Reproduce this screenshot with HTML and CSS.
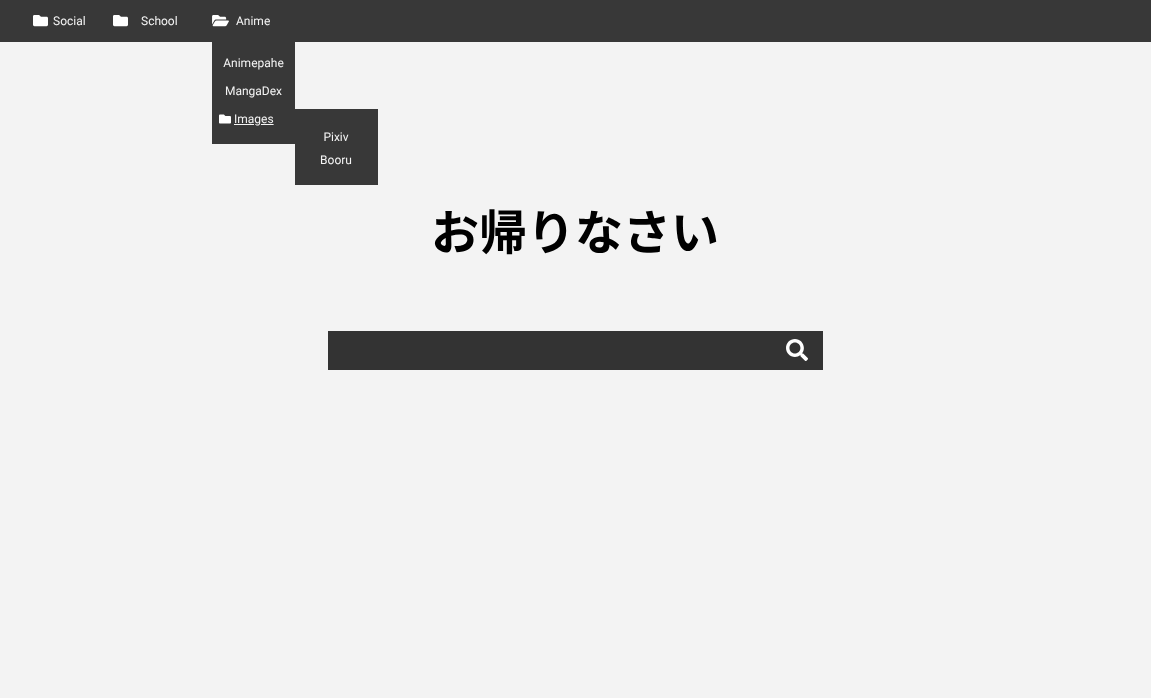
FILE: index.html
```html
<!DOCTYPE html>
<html lang="ja">
<head>
<meta charset="utf-8">
<title>お帰りなさい</title>
<link rel="stylesheet" href="styles.css">
</head>
<body>
<svg class="sprite" width="0" height="0" aria-hidden="true">
  <symbol id="folder" viewBox="0 0 512 512"><path d="M464 128H272l-64-64H48C21.49 64 0 85.49 0 112v288c0 26.51 21.49 48 48 48h416c26.51 0 48-21.49 48-48V176c0-26.51-21.49-48-48-48z"/></symbol>
  <symbol id="folder-open" viewBox="0 0 576 512"><path d="M572.694 292.093L500.27 416.248A63.997 63.997 0 0 1 444.989 448H45.025c-18.523 0-30.064-20.093-20.731-36.093l72.424-124.155A64 64 0 0 1 152 256h399.964c18.523 0 30.064 20.093 20.73 36.093zM152 224h328v-48c0-26.51-21.49-48-48-48H272l-64-64H48C21.49 64 0 85.49 0 112v278.046l69.077-118.418C86.214 242.25 117.989 224 152 224z"/></symbol>
  <symbol id="search" viewBox="0 0 512 512"><path d="M505 442.7L405.3 343c-4.5-4.5-10.6-7-17-7H372c27.6-35.3 44-79.7 44-128C416 93.1 322.9 0 208 0S0 93.1 0 208s93.1 208 208 208c48.3 0 92.7-16.4 128-44v16.3c0 6.4 2.5 12.5 7 17l99.7 99.7c9.4 9.4 24.6 9.4 33.9 0l28.3-28.3c9.4-9.4 9.4-24.6.1-34zM208 336c-70.7 0-128-57.2-128-128 0-70.7 57.2-128 128-128 70.7 0 128 57.2 128 128 0 70.7-57.2 128-128 128z"/></symbol>
</svg>
<nav class="topbar">
  <div class="nav-item nav-social">
    <svg class="icon"><use href="#folder"/></svg>
    <a class="nav-link" href="#">Social</a>
  </div>
  <div class="nav-item nav-school">
    <svg class="icon"><use href="#folder"/></svg>
    <a class="nav-link" href="#">School</a>
  </div>
  <div class="nav-item nav-anime">
    <svg class="icon icon-open"><use href="#folder-open"/></svg>
    <a class="nav-link" href="#">Anime</a>
    <div class="menu">
      <a class="menu-link" href="#">Animepahe</a>
      <a class="menu-link" href="#">MangaDex</a>
      <div class="menu-folder">
        <svg class="icon-small"><use href="#folder"/></svg>
        <a class="menu-folder-link" href="#">Images</a>
        <div class="submenu">
          <a class="submenu-link" href="#">Pixiv</a>
          <a class="submenu-link" href="#">Booru</a>
        </div>
      </div>
    </div>
  </div>
</nav>
<main class="hero">
  <h1 class="title">お帰りなさい</h1>
  <form class="search">
    <input class="search-input" type="text" aria-label="Search">
    <button class="search-button" type="button" aria-label="Search">
      <svg class="search-icon"><use href="#search"/></svg>
    </button>
  </form>
</main>
</body>
</html>
```
FILE: styles.css
```css
* {
  box-sizing: border-box;
}

html,
body {
  margin: 0;
  height: 100%;
}

body {
  background: #f3f3f3;
  color: #000;
  font-family: Roboto, "Liberation Sans", sans-serif;
  font-size: 12px;
  text-rendering: geometricPrecision;
  overflow: hidden;
}

.sprite {
  display: block;
  height: 0;
}

a {
  color: #f4f4f4;
  text-decoration: none;
  will-change: transform;
}

.topbar {
  display: flex;
  align-items: center;
  height: 42px;
  padding-left: 33px;
  background: #383838;
}

.nav-item {
  position: relative;
  display: flex;
  align-items: center;
  height: 42px;
}

.nav-social {
  width: 80px;
}

.nav-school {
  width: 99px;
}

.icon {
  width: 15px;
  height: 15px;
  margin-bottom: 2px;
  fill: #fff;
}

.icon-open {
  width: 17px;
}

.nav-social .icon {
  margin-right: 5px;
}

.nav-school .icon {
  margin-right: 12.6px;
}

.nav-anime .icon {
  margin-right: 7px;
}

.menu {
  position: absolute;
  top: 42px;
  left: 0;
  width: 83px;
  height: 102px;
  padding-top: 7px;
  background: #383838;
  text-align: center;
}

.menu-link {
  display: block;
  line-height: 28px;
}

.menu-folder {
  position: relative;
  display: flex;
  align-items: center;
  height: 28px;
  padding-left: 7px;
}

.icon-small {
  width: 12px;
  height: 12px;
  margin-right: 3px;
  fill: #fff;
}

.menu-folder-link {
  text-decoration: underline;
}

.submenu {
  position: absolute;
  top: 4px;
  left: 83px;
  width: 83px;
  height: 76px;
  padding: 17px 1px 0 0;
  background: #383838;
  text-align: center;
}

.submenu-link {
  display: block;
  line-height: 23px;
}

.hero {
  display: flex;
  flex-direction: column;
  align-items: center;
  padding-top: 152px;
}

.title {
  margin: 0;
  font-family: "Noto Sans CJK JP", sans-serif;
  font-size: 48px;
  font-weight: 700;
  line-height: 70px;
  will-change: transform;
}

.search {
  display: flex;
  align-items: center;
  width: 495px;
  height: 39px;
  margin-top: 67px;
  background: #333;
}

.search-input {
  flex: 1;
  min-width: 0;
  height: 100%;
  border: 0;
  outline: 0;
  background: transparent;
}

.search-button {
  display: flex;
  padding: 0;
  margin-right: 15px;
  border: 0;
  background: transparent;
}

.search-icon {
  width: 22px;
  height: 22px;
  margin-bottom: 2px;
  fill: #fff;
}
```
